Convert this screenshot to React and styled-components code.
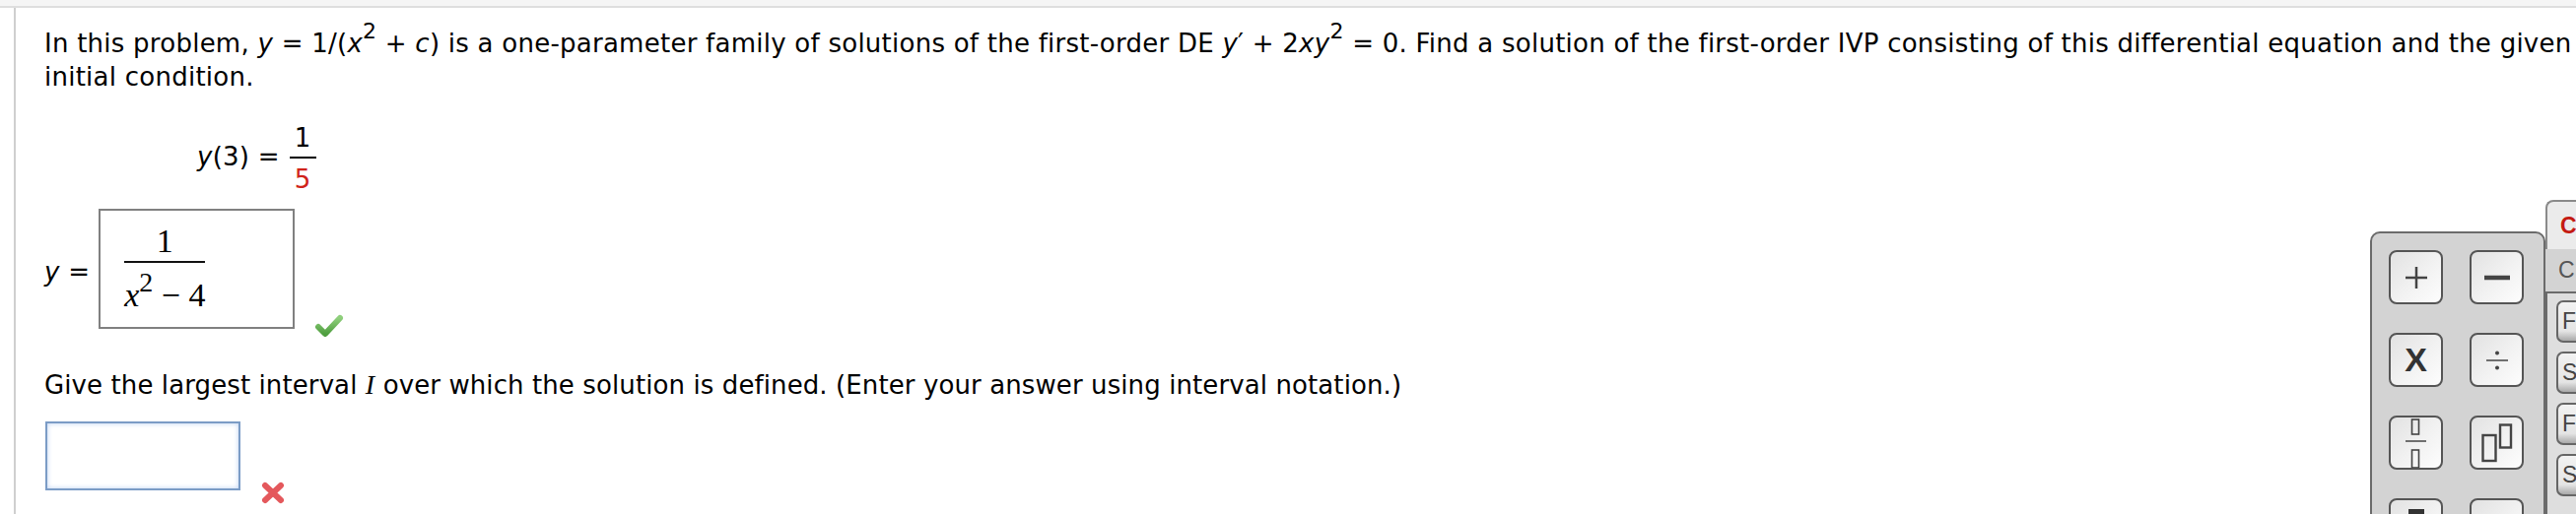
import React from "react";
import styled, { createGlobalStyle } from "styled-components";

const GlobalStyle = createGlobalStyle`
  html, body {
    margin: 0;
    padding: 0;
    background: #fff;
    overflow: hidden;
  }
  body {
    font-family: "DejaVu Sans", Verdana, sans-serif;
    color: #000;
  }
`;

const Page = styled.div`
  width: 2614px;
  height: 522px;
  overflow: hidden;
  display: flex;
  flex-direction: column;
`;

const TopBar = styled.div`
  flex-shrink: 0;
  height: 6px;
  background: #f5f5f5;
  border-bottom: 2px solid #dedede;
`;

const Body = styled.div`
  flex: 1;
  margin-left: 14px;
  border-left: 2px solid #cfcfcf;
  padding-left: 29px;
  display: flex;
  flex-direction: column;
  letter-spacing: 0.25px;
`;

const Prompt = styled.p`
  margin: 0;
  padding-top: 19px;
  font-size: 26px;
  line-height: 34px;
`;

const Var = styled.i`
  font-style: italic;
`;

const Sup = styled.sup`
  font-size: ${(p) => p.size || 22}px;
  vertical-align: ${(p) => p.raise || 14}px;
  line-height: 0;
`;

const Row = styled.div`
  display: flex;
  align-items: flex-start;
`;

const Question = styled.div`
  flex: 1;
  display: flex;
  flex-direction: column;
`;

const Condition = styled.div`
  margin-top: 31px;
  padding-left: 155px;
  display: flex;
  align-items: center;
  font-size: 26px;
  line-height: 34px;
`;

const LeftSide = styled.span`
  padding-bottom: 5px;
`;

const Frac = styled.span`
  display: inline-flex;
  flex-direction: column;
  align-items: stretch;
  margin-left: ${(p) => p.gap || 0}px;
`;

const Num = styled.span`
  text-align: center;
  padding: 0 ${(p) => p.pad || 0}px ${(p) => p.below || 0}px;
  line-height: ${(p) => p.lh || 28}px;
  border-bottom: 2px solid ${(p) => p.bar || "#000"};
`;

const Den = styled.span`
  text-align: center;
  padding: ${(p) => p.above || 0}px ${(p) => p.pad || 0}px 0;
  line-height: ${(p) => p.lh || 28}px;
  color: ${(p) => p.color || "inherit"};
`;

const AnswerRow = styled.div`
  margin-top: 16px;
  display: flex;
  align-items: flex-end;
`;

const Label = styled.span`
  align-self: center;
  font-size: 26px;
  line-height: 34px;
  margin-right: 9px;
  padding-top: 6px;
`;

const MathBox = styled.div`
  width: 199px;
  height: 122px;
  box-sizing: border-box;
  border: 2px solid #808080;
  background: #fff;
  padding: 12px 0 0 24px;
  font-family: "Liberation Serif", "Times New Roman", serif;
  font-size: 34px;
  letter-spacing: 0;
`;

const Mark = styled.span`
  display: inline-flex;
  margin-left: 20px;
  margin-bottom: ${(p) => p.drop || 0}px;
`;

const Instruction = styled.p`
  margin: 40px 0 0;
  font-size: 26px;
  line-height: 34px;
  letter-spacing: 0.1px;
`;

const SerifVar = styled.i`
  font-family: "Liberation Serif", "Times New Roman", serif;
  font-size: 28px;
`;

const InputRow = styled.div`
  margin-top: 20px;
  display: flex;
  align-items: flex-end;
`;

const TextInput = styled.div`
  width: 198px;
  height: 70px;
  margin-left: 1px;
  box-sizing: border-box;
  border: 2px solid #7b9cc6;
  background: #fff;
  box-shadow: inset 0 0 5px rgba(130, 170, 230, 0.55);
`;

/* calculator palette */
const Calc = styled.div`
  flex: 0 0 209px;
  min-width: 0;
  margin-top: 108px;
  display: flex;
  align-items: flex-start;
  letter-spacing: 0;
`;

const Keypad = styled.div`
  flex-shrink: 0;
  margin-top: 32px;
  width: 178px;
  height: 320px;
  box-sizing: border-box;
  background: #d3d3d3;
  border: 2px solid #6b6b6b;
  border-radius: 10px 10px 0 0;
  padding: 17px 0 0 17px;
  display: grid;
  grid-template-columns: 55px 55px;
  grid-auto-rows: 55px;
  column-gap: 27px;
  row-gap: 29px;
`;

const Key = styled.div`
  box-sizing: border-box;
  border: 2px solid #555;
  border-radius: 8px;
  background: linear-gradient(135deg, #e2e2e2 0%, #f2f2f2 55%, #fdfdfd 100%);
  display: flex;
  align-items: ${(p) => p.align || "center"};
  justify-content: center;
  overflow: hidden;
  color: #333;
  font-family: "Liberation Sans", Arial, sans-serif;
  font-weight: 700;
  font-size: 34px;
`;

const Side = styled.div`
  flex-shrink: 0;
  width: 200px;
  display: flex;
  flex-direction: column;
`;

const Tab = styled.div`
  height: 50px;
  box-sizing: border-box;
  background: #ebebeb;
  border: 2px solid #8a8a8a;
  border-bottom: none;
  border-right: none;
  border-top-left-radius: 8px;
  padding-left: 13px;
  color: #c41a12;
  font-family: "Liberation Sans", Arial, sans-serif;
  font-weight: 700;
  font-size: 23px;
  line-height: 48px;
`;

const Section = styled.div`
  height: 43px;
  box-sizing: border-box;
  background: #d3d3d3;
  padding-left: 13px;
  color: #555;
  font-family: "Liberation Sans", Arial, sans-serif;
  font-size: 23px;
  line-height: 43px;
`;

const Group = styled.div`
  height: 240px;
  box-sizing: border-box;
  background: #dedede;
  border-top: 2px solid #6b6b6b;
  border-left: 2px solid #6b6b6b;
  padding: 7px 0 0 9px;
  display: flex;
  flex-direction: column;
  gap: 9px;
`;

const SideKey = styled.div`
  height: 43px;
  box-sizing: border-box;
  border: 2px solid #666;
  border-right: none;
  border-radius: 7px 0 0 7px;
  background: linear-gradient(#f2f2f2 0%, #e4e4e4 75%, #a9a9a9 100%);
  padding-left: 4px;
  color: #444;
  font-family: "Liberation Sans", Arial, sans-serif;
  font-size: 23px;
  line-height: 38px;
`;

const Check = () => (
  <svg width="30" height="25" viewBox="0 0 30 25">
    <defs>
      <linearGradient id="chk" x1="0" y1="0" x2="0" y2="1">
        <stop offset="0" stopColor="#8fcf7c" />
        <stop offset="1" stopColor="#4f9e3f" />
      </linearGradient>
    </defs>
    <path d="M4 13 L11 20 L26 4" fill="none" stroke="url(#chk)" strokeWidth="6" strokeLinecap="round" strokeLinejoin="round" />
  </svg>
);

const Cross = () => (
  <svg width="26" height="25" viewBox="0 0 26 25">
    <path d="M5 5 L21 20 M21 5 L5 20" fill="none" stroke="#e4585c" strokeWidth="6" strokeLinecap="round" />
  </svg>
);

const PlusIcon = () => (
  <svg width="24" height="24" viewBox="0 0 24 24">
    <path d="M12 1 V23 M1 12 H23" stroke="#444" strokeWidth="2.5" />
  </svg>
);

const MinusIcon = () => (
  <svg width="26" height="6" viewBox="0 0 26 6">
    <path d="M0 3 H26" stroke="#444" strokeWidth="4.5" />
  </svg>
);

const DivideIcon = () => (
  <svg width="24" height="22" viewBox="0 0 24 22">
    <path d="M1 11 H23" stroke="#444" strokeWidth="1.6" />
    <circle cx="12" cy="3.5" r="2" fill="#444" />
    <circle cx="12" cy="18.5" r="2" fill="#444" />
  </svg>
);

const FracIcon = () => (
  <svg width="22" height="54" viewBox="0 0 22 54">
    <rect x="6.5" y="5" width="7" height="15" fill="none" stroke="#444" strokeWidth="1.6" />
    <path d="M0 27 H21" stroke="#444" strokeWidth="1.6" />
    <rect x="6.5" y="36" width="7" height="18" fill="none" stroke="#444" strokeWidth="1.6" />
  </svg>
);

const PowerIcon = () => (
  <svg width="32" height="40" viewBox="0 0 32 40">
    <rect x="1.5" y="12" width="13" height="26" fill="none" stroke="#444" strokeWidth="2.4" />
    <rect x="19" y="1.5" width="11" height="23" fill="none" stroke="#444" strokeWidth="2.4" />
  </svg>
);

const RootIcon = () => (
  <svg width="20" height="20" viewBox="0 0 20 20">
    <rect x="2" y="9" width="16" height="10" fill="#333" />
  </svg>
);

export default function App() {
  return (
    <Page>
      <GlobalStyle />
      <TopBar />
      <Body>
        <Prompt>
          In this problem, <Var>y</Var> = 1/(<Var>x</Var>
          <Sup>2</Sup> + <Var>c</Var>) is a one-parameter family of solutions of the
          first-order DE <Var>y</Var>′ + 2<Var>xy</Var>
          <Sup>2</Sup> = 0. Find a solution of the first-order IVP consisting of this
          differential equation and the given initial condition.
        </Prompt>
        <Row>
          <Question>
            <Condition>
              <LeftSide>
                <Var>y</Var>(3) =
              </LeftSide>
              <Frac gap={10}>
                <Num pad={5} below={5}>1</Num>
                <Den pad={5} above={7} color="#d0231a">5</Den>
              </Frac>
            </Condition>

            <AnswerRow>
              <Label>
                <Var>y</Var> =
              </Label>
              <MathBox>
                <Frac>
                  <Num lh={34} below={3} bar="#111">1</Num>
                  <Den lh={34} above={16}>
                    <i>x</i>
                    <Sup size={28} raise={15}>2</Sup> − 4
                  </Den>
                </Frac>
              </MathBox>
              <Mark drop={-10}>
                <Check />
              </Mark>
            </AnswerRow>

            <Instruction>
              Give the largest interval <SerifVar>I</SerifVar> over which the solution
              is defined. (Enter your answer using interval notation.)
            </Instruction>

            <InputRow>
              <TextInput />
              <Mark drop={-15}>
                <Cross />
              </Mark>
            </InputRow>
          </Question>

          <Calc>
            <Keypad>
              <Key><PlusIcon /></Key>
              <Key><MinusIcon /></Key>
              <Key>X</Key>
              <Key><DivideIcon /></Key>
              <Key align="flex-end"><FracIcon /></Key>
              <Key><PowerIcon /></Key>
              <Key align="flex-start"><RootIcon /></Key>
              <Key />
            </Keypad>
            <Side>
              <Tab>C</Tab>
              <Section>C</Section>
              <Group>
                <SideKey>F</SideKey>
                <SideKey>S</SideKey>
                <SideKey>F</SideKey>
                <SideKey>S</SideKey>
              </Group>
            </Side>
          </Calc>
        </Row>
      </Body>
    </Page>
  );
}
